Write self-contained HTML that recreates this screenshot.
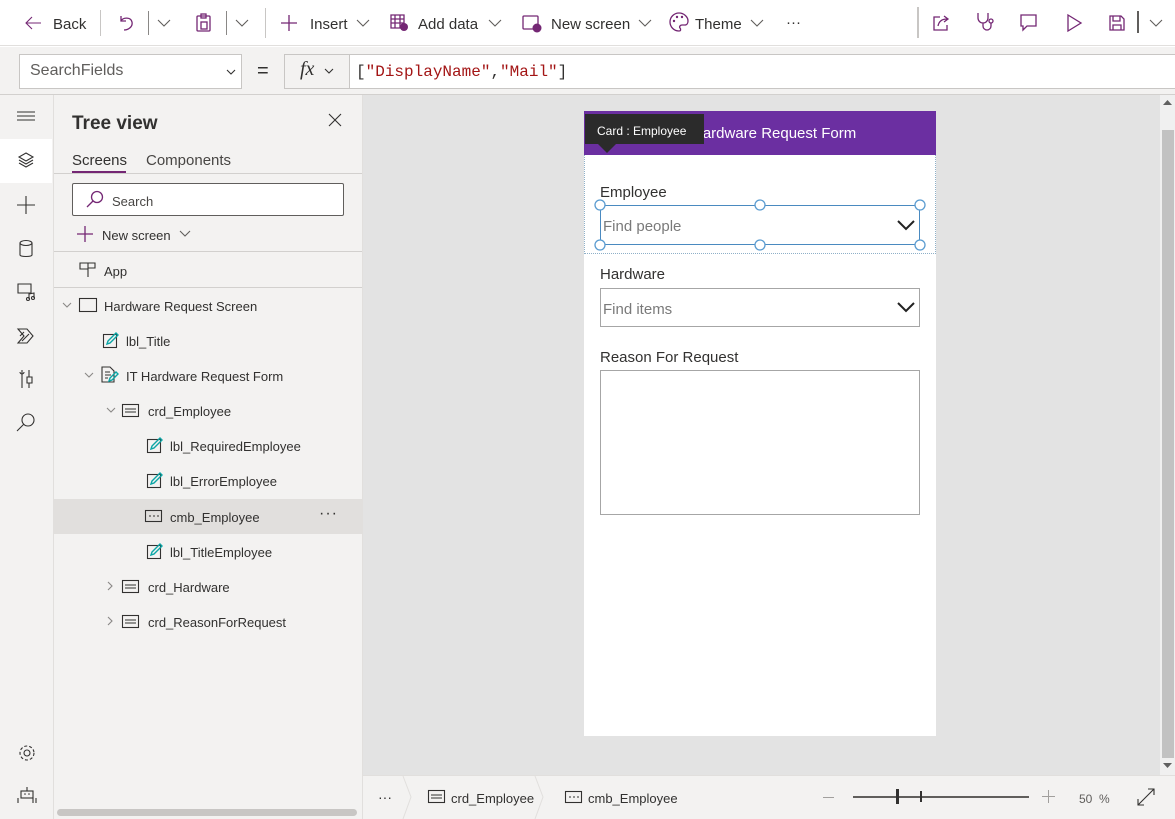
<!DOCTYPE html>
<html><head><meta charset="utf-8"><style>
*{box-sizing:border-box;margin:0;padding:0}
body{width:1175px;height:819px;overflow:hidden;font-family:"Segoe UI","Liberation Sans",sans-serif;color:#323130;background:#fff;position:relative}
.a{position:absolute}
.t{font-size:14px;white-space:nowrap;margin-top:2px}
svg{position:absolute;overflow:visible}
.ic{stroke:#323130;fill:none;stroke-width:1.1}
.pu{stroke:#742774;fill:none;stroke-width:1.3}
.row{position:absolute;left:54px;width:308px;height:35px;font-size:13px;line-height:37px;white-space:nowrap}
</style></head><body>
<!-- toolbar -->
<div class="a" style="left:0;top:0;width:1175px;height:46px;background:#fff;border-bottom:1px solid #e1dfdd"></div>
<svg style="left:24px;top:15px" width="18" height="16"><path d="M17 8H2M8 2L2 8l6 6" class="ic" style="stroke:#742774"/></svg>
<div class="a t" style="left:53px;top:14px;font-size:15px">Back</div>
<div class="a" style="left:100px;top:10px;width:1px;height:26px;background:#c8c6c4"></div>
<svg style="left:117px;top:14px" width="18" height="18"><path d="M4 2v5h5M4 7c2-4 10-4 11 1s-4 8-8 8" class="pu"/></svg>
<div class="a" style="left:148px;top:11px;width:1px;height:24px;background:#8a8886"></div>
<svg style="left:157px;top:19px" width="14" height="8"><path d="M1 1l6 6 6-6" class="ic" style="stroke:#605e5c"/></svg>
<svg style="left:195px;top:13px" width="18" height="20"><rect x="2" y="3" width="13" height="15" rx="1" class="pu"/><rect x="6" y="1" width="5" height="4" class="pu"/><rect x="6" y="9" width="6" height="7" class="pu"/></svg>
<div class="a" style="left:226px;top:11px;width:1px;height:24px;background:#8a8886"></div>
<svg style="left:235px;top:19px" width="14" height="8"><path d="M1 1l6 6 6-6" class="ic" style="stroke:#605e5c"/></svg>
<div class="a" style="left:265px;top:8px;width:1px;height:30px;background:#c8c6c4"></div>
<svg style="left:281px;top:15px" width="16" height="16"><path d="M8 0v16M0 8h16" class="pu"/></svg>
<div class="a t" style="left:310px;top:14px;font-size:15px">Insert</div>
<svg style="left:356px;top:19px" width="14" height="8"><path d="M1 1l6 6 6-6" class="ic" style="stroke:#605e5c"/></svg>
<svg style="left:390px;top:14px" width="20" height="18"><path d="M1 1h13v13H1zM1 5h13M1 9h13M5 1v13M10 1v13" class="pu"/><circle cx="14" cy="13" r="4" fill="#742774"/></svg>
<div class="a t" style="left:418px;top:14px;font-size:15px">Add data</div>
<svg style="left:488px;top:19px" width="14" height="8"><path d="M1 1l6 6 6-6" class="ic" style="stroke:#605e5c"/></svg>
<svg style="left:522px;top:15px" width="20" height="18"><rect x="1" y="1" width="15" height="13" rx="1" class="pu"/><circle cx="15" cy="13" r="4.5" fill="#742774"/></svg>
<div class="a t" style="left:551px;top:14px;font-size:15px">New screen</div>
<svg style="left:638px;top:19px" width="14" height="8"><path d="M1 1l6 6 6-6" class="ic" style="stroke:#605e5c"/></svg>
<svg style="left:669px;top:12px" width="20" height="20"><path d="M10 1a9 9 0 1 0 0 18c2 0 2-2 1-3s0-3 2-3h3c2 0 3-2 3-4 0-4-4-8-9-8z" class="pu"/><circle cx="5" cy="9" r="1.2" fill="#742774"/><circle cx="8" cy="5" r="1.2" fill="#742774"/><circle cx="13" cy="5" r="1.2" fill="#742774"/></svg>
<div class="a t" style="left:695px;top:14px;font-size:15px">Theme</div>
<svg style="left:750px;top:19px" width="14" height="8"><path d="M1 1l6 6 6-6" class="ic" style="stroke:#605e5c"/></svg>
<div class="a t" style="left:786px;top:12px;font-size:15px">···</div>
<div class="a" style="left:917px;top:7px;width:2px;height:31px;background:#c8c6c4"></div>
<svg style="left:932px;top:14px" width="18" height="18"><path d="M8 3H2v13h13v-5M6 12c1-5 4-7 9-7M12 2l4 3-4 3" class="pu"/></svg>
<svg style="left:976px;top:12px" width="20" height="20"><path d="M2 1v5a5 5 0 0 0 10 0V1M7 11v3a4 4 0 0 0 8 0v-3" class="pu"/><circle cx="15" cy="9" r="2" class="pu"/></svg>
<svg style="left:1019px;top:14px" width="20" height="18"><path d="M2 1h15v11H8l-4 4v-4H2z" class="pu"/></svg>
<svg style="left:1066px;top:14px" width="16" height="18"><path d="M2 1l13 8-13 8z" class="pu"/></svg>
<svg style="left:1108px;top:14px" width="18" height="18"><path d="M2 2h11l3 3v11H2zM5 2v5h7V2M5 16v-5h8v5" class="pu"/></svg>
<div class="a" style="left:1137px;top:11px;width:2px;height:22px;background:#605e5c"></div>
<svg style="left:1149px;top:19px" width="14" height="8"><path d="M1 1l6 6 6-6" class="ic" style="stroke:#605e5c"/></svg>
<!-- formula bar -->
<div class="a" style="left:0;top:47px;width:1175px;height:48px;background:#f3f2f1;border-bottom:1px solid #d2d0ce"></div>
<div class="a" style="left:19px;top:54px;width:223px;height:35px;background:#fff;border:1px solid #c8c6c4"></div>
<div class="a t" style="left:30px;top:60px;font-size:16px;color:#605e5c">SearchFields</div>
<svg style="left:226px;top:69px" width="10" height="6"><path d="M1 1l4 4 4-4" class="ic"/></svg>
<div class="a t" style="left:257px;top:58px;font-size:20px">=</div>
<div class="a" style="left:284px;top:54px;width:66px;height:35px;background:#f3f2f1;border:1px solid #c8c6c4"></div>
<div class="a" style="left:300px;top:58px;font-family:'Liberation Serif',serif;font-style:italic;font-size:20px">fx</div>
<svg style="left:324px;top:68px" width="10" height="6"><path d="M1 1l4 4 4-4" class="ic"/></svg>
<div class="a" style="left:349px;top:54px;width:826px;height:35px;background:#fff;border:1px solid #c8c6c4;border-right:none"></div>
<div class="a t" style="left:356px;top:61px;font-family:'Liberation Mono',monospace;font-size:16px;color:#323130">[<span style="color:#a31515">"DisplayName"</span>,<span style="color:#a31515">"Mail"</span>]</div>
<!-- left rail -->
<div class="a" style="left:0;top:95px;width:54px;height:724px;background:#f3f2f1;border-right:1px solid #e1dfdd"></div>
<div class="a" style="left:0;top:139px;width:52px;height:44px;background:#fff"></div>
<svg style="left:17px;top:111px" width="18" height="12"><path d="M0 1h18M0 5h18M0 9h18" class="ic"/></svg>
<svg style="left:18px;top:152px" width="16" height="16"><path d="M8 1l7 4-7 4-7-4zM1 8l7 4 7-4M1 11l7 4 7-4" class="ic"/></svg>
<svg style="left:17px;top:196px" width="18" height="18"><path d="M9 0v18M0 9h18" class="ic"/></svg>
<svg style="left:19px;top:240px" width="14" height="18"><ellipse cx="7" cy="3" rx="6" ry="2.5" class="ic"/><path d="M1 3v12c0 2 12 2 12 0V3" class="ic"/></svg>
<svg style="left:17px;top:283px" width="20" height="18"><path d="M1 1h13v9H1zM12 16v-5l5-1v5" class="ic"/><circle cx="11" cy="16" r="1.5" class="ic"/><circle cx="16" cy="15" r="1.5" class="ic"/></svg>
<svg style="left:17px;top:328px" width="18" height="16"><path d="M1 1h9l6 7-6 7H1l6-7zM5 13l7-7M3 8l4-4" class="ic"/></svg>
<svg style="left:19px;top:369px" width="14" height="20"><path d="M3 1v18M1 3a2 2 0 0 0 4 0M10 1v7M8 8h5v6h-5zM10 14v5" class="ic"/></svg>
<svg style="left:16px;top:413px" width="20" height="20"><circle cx="12" cy="7" r="6" class="ic"/><path d="M8 11L1 18" class="ic"/></svg>
<svg style="left:18px;top:744px" width="18" height="18"><circle cx="9" cy="9" r="3" class="ic"/><circle cx="9" cy="9" r="7" class="ic" stroke-dasharray="3 2"/></svg>
<svg style="left:18px;top:786px" width="18" height="18"><rect x="3" y="5" width="12" height="7" class="ic"/><path d="M9 1v4M0 12v5M18 12v5M3 12h12v5" class="ic"/><circle cx="7" cy="8" r=".8" fill="#323130"/><circle cx="11" cy="8" r=".8" fill="#323130"/></svg>
<!-- tree panel -->
<div class="a" style="left:54px;top:95px;width:309px;height:724px;background:#f3f2f1;border-right:1px solid #e1dfdd"></div>
<div class="a t" style="left:72px;top:111px;font-size:19px;font-weight:600;color:#323130">Tree view</div>
<svg style="left:328px;top:113px" width="14" height="14"><path d="M1 1l12 12M13 1L1 13" class="ic"/></svg>
<div class="a t" style="left:72px;top:150px;font-size:15px">Screens</div>
<div class="a" style="left:72px;top:171px;width:54px;height:2px;background:#742774"></div>
<div class="a t" style="left:146px;top:150px;font-size:15px;color:#484644">Components</div>
<div class="a" style="left:54px;top:173px;width:308px;height:1px;background:#d2d0ce"></div>
<div class="a" style="left:72px;top:183px;width:272px;height:33px;background:#fff;border:1px solid #605e5c;border-radius:2px"></div>
<svg style="left:86px;top:190px" width="18" height="18"><circle cx="11" cy="7" r="5.5" class="pu"/><path d="M7 11l-6 6" class="pu"/></svg>
<div class="a t" style="left:112px;top:192px;font-size:13px;color:#484644">Search</div>
<svg style="left:76px;top:225px" width="18" height="18"><path d="M9 1v16M1 9h16" class="pu"/></svg>
<div class="a t" style="left:102px;top:226px;font-size:13px">New screen</div>
<svg style="left:179px;top:230px" width="12" height="7"><path d="M1 1l5 5 5-5" class="ic" style="stroke:#605e5c"/></svg>
<div class="a" style="left:54px;top:251px;width:308px;height:1px;background:#d2d0ce"></div>
<div class="row" style="top:253px"><svg style="left:25px;top:9px" width="18" height="16"><path d="M1 1h8v6H1zM1 7h8v8M9 1h7v5H9" class="ic"/></svg><span style="position:absolute;left:50px">App</span></div>
<div class="a" style="left:54px;top:287px;width:308px;height:1px;background:#d2d0ce"></div>
<div class="row" style="top:288px"><svg style="left:8px;top:14px" width="10" height="6"><path d="M1 1l4 4 4-4" class="ic" style="stroke:#8a8886"/></svg><svg style="left:25px;top:10px" width="18" height="14"><rect x="0.5" y="0.5" width="17" height="13" class="ic"/></svg><span style="position:absolute;left:50px">Hardware Request Screen</span></div>
<div class="row" style="top:323px"><svg style="left:49px;top:9px" width="16" height="16"><rect x="0.5" y="2.5" width="13" height="13" class="ic"/><path d="M4 12l1-3 8-8 2 2-8 8z" fill="none" stroke="#0aa5a5" stroke-width="1.4"/></svg><span style="position:absolute;left:72px">lbl_Title</span></div>
<div class="row" style="top:358px"><svg style="left:30px;top:14px" width="10" height="6"><path d="M1 1l4 4 4-4" class="ic" style="stroke:#8a8886"/></svg><svg style="left:47px;top:8px" width="18" height="18"><path d="M1 1h8l4 4v11H1zM4 6h5M4 9h6M4 12h3" class="ic"/><path d="M8 15l1-3 6-6 2 2-6 6z" fill="none" stroke="#0aa5a5" stroke-width="1.4"/></svg><span style="position:absolute;left:72px">IT Hardware Request Form</span></div>
<div class="row" style="top:393px"><svg style="left:52px;top:14px" width="10" height="6"><path d="M1 1l4 4 4-4" class="ic" style="stroke:#8a8886"/></svg><svg style="left:68px;top:11px" width="18" height="14"><rect x="0.5" y="0.5" width="16" height="12" class="ic"/><path d="M3 5h11M3 8h11" class="ic"/></svg><span style="position:absolute;left:94px">crd_Employee</span></div>
<div class="row" style="top:428px"><svg style="left:93px;top:9px" width="16" height="16"><rect x="0.5" y="2.5" width="13" height="13" class="ic"/><path d="M4 12l1-3 8-8 2 2-8 8z" fill="none" stroke="#0aa5a5" stroke-width="1.4"/></svg><span style="position:absolute;left:116px">lbl_RequiredEmployee</span></div>
<div class="row" style="top:463px"><svg style="left:93px;top:9px" width="16" height="16"><rect x="0.5" y="2.5" width="13" height="13" class="ic"/><path d="M4 12l1-3 8-8 2 2-8 8z" fill="none" stroke="#0aa5a5" stroke-width="1.4"/></svg><span style="position:absolute;left:116px">lbl_ErrorEmployee</span></div>
<div class="row" style="top:499px;background:#e1dfdd"><svg style="left:91px;top:11px" width="18" height="12"><rect x="0.5" y="0.5" width="16" height="11" class="ic"/><path d="M4 6h2M8 6h2M12 6h2" class="ic"/></svg><span style="position:absolute;left:116px">cmb_Employee</span><span style="position:absolute;left:265px;top:-4px;font-size:16px;letter-spacing:1px">···</span></div>
<div class="row" style="top:534px"><svg style="left:93px;top:9px" width="16" height="16"><rect x="0.5" y="2.5" width="13" height="13" class="ic"/><path d="M4 12l1-3 8-8 2 2-8 8z" fill="none" stroke="#0aa5a5" stroke-width="1.4"/></svg><span style="position:absolute;left:116px">lbl_TitleEmployee</span></div>
<div class="row" style="top:569px"><svg style="left:53px;top:12px" width="6" height="10"><path d="M1 1l4 4-4 4" class="ic" style="stroke:#8a8886"/></svg><svg style="left:68px;top:11px" width="18" height="14"><rect x="0.5" y="0.5" width="16" height="12" class="ic"/><path d="M3 5h11M3 8h11" class="ic"/></svg><span style="position:absolute;left:94px">crd_Hardware</span></div>
<div class="row" style="top:604px"><svg style="left:53px;top:12px" width="6" height="10"><path d="M1 1l4 4-4 4" class="ic" style="stroke:#8a8886"/></svg><svg style="left:68px;top:11px" width="18" height="14"><rect x="0.5" y="0.5" width="16" height="12" class="ic"/><path d="M3 5h11M3 8h11" class="ic"/></svg><span style="position:absolute;left:94px">crd_ReasonForRequest</span></div>
<div class="a" style="left:57px;top:809px;width:300px;height:7px;background:#c8c6c4;border-radius:4px"></div>
<!-- canvas -->
<div class="a" style="left:363px;top:95px;width:797px;height:680px;background:#e3e3e3"></div>
<div class="a" style="left:1160px;top:95px;width:15px;height:680px;background:#f0f0f0"></div>
<div class="a" style="left:1162px;top:130px;width:12px;height:628px;background:#c2c2c2"></div>
<svg style="left:1163px;top:100px" width="9" height="6"><path d="M0 5l4.5-5 4.5 5z" fill="#606060"/></svg>
<svg style="left:1163px;top:763px" width="9" height="6"><path d="M0 0l4.5 5 4.5-5z" fill="#606060"/></svg>
<div class="a" style="left:584px;top:111px;width:352px;height:625px;background:#fff"></div>
<div class="a" style="left:584px;top:111px;width:352px;height:44px;background:#6b2fa1"></div>
<div class="a t" style="left:692px;top:123px;font-size:15px;color:#fff">Hardware Request Form</div>
<div class="a" style="left:585px;top:114px;width:119px;height:30px;background:#2b2b2b"></div>
<div class="a" style="left:598px;top:144px;width:0;height:0;border-left:9px solid transparent;border-right:9px solid transparent;border-top:9px solid #2b2b2b"></div>
<div class="a t" style="left:597px;top:122px;font-size:12px;color:#fff">Card : Employee</div>
<div class="a" style="left:584px;top:155px;width:352px;height:99px;border:1px dotted #8fb0c8;border-top:none"></div>
<div class="a t" style="left:600px;top:182px;font-size:15px;font-weight:500;color:#323130">Employee</div>
<div class="a" style="left:600px;top:205px;width:320px;height:40px;border:1.5px solid #4a8ac0"></div>
<div class="a t" style="left:603px;top:216px;font-size:15px;color:#7a7a7a">Find people</div>
<svg style="left:897px;top:220px" width="18" height="11"><path d="M1 1l8 8 8-8" fill="none" stroke="#222" stroke-width="2"/></svg>
<svg style="left:594px;top:199px" width="332" height="52"><g fill="#fff" stroke="#5a9bd0" stroke-width="1.3"><circle cx="6" cy="6" r="5"/><circle cx="166" cy="6" r="5"/><circle cx="326" cy="6" r="5"/><circle cx="6" cy="46" r="5"/><circle cx="166" cy="46" r="5"/><circle cx="326" cy="46" r="5"/></g></svg>
<div class="a t" style="left:600px;top:264px;font-size:15px;font-weight:500">Hardware</div>
<div class="a" style="left:600px;top:288px;width:320px;height:39px;border:1px solid #a6a6a6"></div>
<div class="a t" style="left:603px;top:299px;font-size:15px;color:#7a7a7a">Find items</div>
<svg style="left:897px;top:302px" width="18" height="11"><path d="M1 1l8 8 8-8" fill="none" stroke="#222" stroke-width="2"/></svg>
<div class="a t" style="left:600px;top:347px;font-size:15px;font-weight:500">Reason For Request</div>
<div class="a" style="left:600px;top:370px;width:320px;height:145px;border:1px solid #a6a6a6"></div>
<!-- bottom bar -->
<div class="a" style="left:363px;top:775px;width:812px;height:44px;background:#f3f2f1;border-top:1px solid #e1dfdd"></div>
<div class="a t" style="left:378px;top:787px;font-size:14px">···</div>
<svg style="left:393px;top:776px" width="160" height="43"><path d="M10 0l8 21-8 22M142 0l8 21-8 22" fill="none" stroke="#e1dfdd"/></svg>
<svg style="left:428px;top:790px" width="18" height="14"><rect x="0.5" y="0.5" width="16" height="12" class="ic"/><path d="M3 5h11M3 8h11" class="ic"/></svg>
<div class="a t" style="left:451px;top:789px;font-size:13px">crd_Employee</div>
<svg style="left:565px;top:791px" width="18" height="12"><rect x="0.5" y="0.5" width="16" height="11" class="ic"/><path d="M4 6h2M8 6h2M12 6h2" class="ic"/></svg>
<div class="a t" style="left:588px;top:789px;font-size:13px">cmb_Employee</div>
<div class="a" style="left:823px;top:797px;width:11px;height:1px;background:#a19f9d"></div>
<div class="a" style="left:853px;top:796px;width:176px;height:2px;background:#605e5c"></div>
<div class="a" style="left:896px;top:789px;width:3px;height:15px;background:#323130"></div>
<div class="a" style="left:920px;top:791px;width:2px;height:11px;background:#323130"></div>
<svg style="left:1042px;top:790px" width="13" height="13"><path d="M6.5 0v13M0 6.5h13" stroke="#a19f9d"/></svg>
<div class="a t" style="left:1079px;top:790px;font-size:12px;color:#605e5c">50 &nbsp;%</div>
<svg style="left:1137px;top:788px" width="18" height="18"><path d="M1 17L17 1M11 1h6v6M1 11v6h6" class="ic"/></svg>
</body></html>
